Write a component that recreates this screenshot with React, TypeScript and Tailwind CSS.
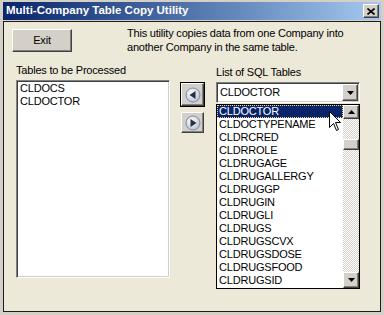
import React from 'react';

const SQL_TABLES = [
  'CLDOCTOR',
  'CLDOCTYPENAME',
  'CLDRCRED',
  'CLDRROLE',
  'CLDRUGAGE',
  'CLDRUGALLERGY',
  'CLDRUGGP',
  'CLDRUGIN',
  'CLDRUGLI',
  'CLDRUGS',
  'CLDRUGSCVX',
  'CLDRUGSDOSE',
  'CLDRUGSFOOD',
  'CLDRUGSID',
];

const PROCESSED = ['CLDOCS', 'CLDOCTOR'];

// classic 3d borders
const RAISED =
  'border border-t-white border-l-white border-r-[#404040] border-b-[#404040] shadow-[inset_-1px_-1px_#808080] bg-[#d4d0c8]';
const SUNKEN =
  'border border-t-[#808080] border-l-[#808080] border-r-white border-b-white shadow-[inset_1px_1px_#404040,inset_-1px_-1px_#d4d0c8] bg-white';

const CircleArrow = ({ dir }: { dir: 'left' | 'right' }) => (
  <svg width="16" height="16" viewBox="0 0 16 16">
    <defs>
      <radialGradient id={`g-${dir}`} cx="0.4" cy="0.35" r="0.7">
        <stop offset="0" stopColor="#ffffff" />
        <stop offset="1" stopColor="#b4c3d8" />
      </radialGradient>
    </defs>
    <circle cx="8" cy="8" r="7" fill={`url(#g-${dir})`} stroke="#7d8ba3" strokeWidth="1" />
    {dir === 'left' ? (
      <path d="M4.5 8 L10.5 4 L10.5 12 Z" fill="#2c3038" />
    ) : (
      <path d="M11.5 8 L5.5 4 L5.5 12 Z" fill="#2c3038" />
    )}
  </svg>
);

const DownTriangle = () => (
  <svg width="7" height="4" viewBox="0 0 7 4">
    <path d="M0 0 H7 L3.5 4 Z" fill="#000" />
  </svg>
);

const UpTriangle = () => (
  <svg width="7" height="4" viewBox="0 0 7 4">
    <path d="M0 4 H7 L3.5 0 Z" fill="#000" />
  </svg>
);

const Cursor = () => (
  <svg width="13" height="21" viewBox="0 0 13 21" className="absolute left-[112px] top-[6px]">
    <path
      d="M0.5 0.5 L0.5 16.5 L4.5 12.5 L7.5 19.5 L9.5 18.5 L6.5 11.5 L11.5 11.5 Z"
      fill="#fff"
      stroke="#000"
      strokeWidth="1"
    />
  </svg>
);

const App = () => {
  return (
    <div className="w-[384px] h-[315px] overflow-hidden bg-[#d4d0c8] font-['Liberation_Sans',Arial,sans-serif] text-[11px] tracking-[-0.2px] text-black">
      <div className="flex h-full flex-col px-[3px] pt-[2px] pb-[3px]">
        {/* title bar */}
        <div className="flex h-[18px] shrink-0 items-center bg-gradient-to-r from-[#0a246a] to-[#a6caf0] pl-[3px] pr-[2px]">
          <span className="text-[11.5px] font-bold tracking-normal text-white">Multi-Company Table Copy Utility</span>
          <div className={`ml-auto flex h-[14px] w-[16px] items-center justify-center ${RAISED}`}>
            <svg width="8" height="7" viewBox="0 0 8 7">
              <path d="M0.5 0.5 L7.5 6.5 M7.5 0.5 L0.5 6.5" stroke="#000" strokeWidth="1.6" />
            </svg>
          </div>
        </div>

        {/* client area */}
        <div className="mt-[1px] flex flex-1 flex-col border border-[#1c1c1c] bg-[#ece9d8]">
          <div className="flex items-start pt-[4px]">
            <button className={`ml-[8px] mt-[3px] h-[23px] w-[60px] ${RAISED} text-[11px]`}>Exit</button>
            <p className="ml-[55px] leading-[14px]">
              This utility copies data from one Company into
              <br />
              another Company in the same table.
            </p>
          </div>

          <div className="mt-[10px] flex items-start">
            {/* left column */}
            <div className="ml-[12px] flex flex-col">
              <span className="leading-[13px]">Tables to be Processed</span>
              <div className={`mt-[3px] h-[198px] w-[154px] ${SUNKEN} p-[1px]`}>
                {PROCESSED.map((t) => (
                  <div key={t} className="h-[13px] pl-[2px] leading-[13px]">
                    {t}
                  </div>
                ))}
              </div>
            </div>

            {/* move buttons */}
            <div className="ml-[10px] mt-[18px] flex flex-col">
              <button className="h-[25px] w-[25px] border border-black">
                <div className={`flex h-full w-full items-center justify-center ${RAISED}`}>
                  <CircleArrow dir="left" />
                </div>
              </button>
              <button className={`ml-[1px] mt-[5px] flex h-[21px] w-[23px] items-center justify-center ${RAISED}`}>
                <CircleArrow dir="right" />
              </button>
            </div>

            {/* right column */}
            <div className="ml-[11px] mt-[2px] flex flex-col">
              <span className="leading-[13px]">List of SQL Tables</span>
              <div className={`mt-[3px] flex h-[21px] w-[144px] items-center ${SUNKEN} p-[1px]`}>
                <span className="flex-1 pl-[2px] leading-[13px]">CLDOCTOR</span>
                <div className={`flex h-[17px] w-[16px] items-center justify-center ${RAISED}`}>
                  <DownTriangle />
                </div>
              </div>
              <div className="relative mt-[1px] flex h-[185px] w-[144px] border border-black bg-white">
                <div className="flex-1">
                  {SQL_TABLES.map((t, i) => (
                    <div
                      key={t}
                      className={
                        i === 0
                          ? 'h-[13px] bg-[#0a246a] pl-[1px] leading-[11px] text-white outline-1 -outline-offset-1 outline-dotted outline-[#f4dc8c]'
                          : 'h-[13px] pl-[2px] leading-[13px]'
                      }
                    >
                      {i === 0 ? <span className="block pl-[1px] leading-[13px]">{t}</span> : t}
                    </div>
                  ))}
                </div>
                <div className="flex w-[16px] flex-col bg-[repeating-conic-gradient(#d4d0c8_0_25%,#ffffff_0_50%)] bg-[length:2px_2px]">
                  <div className={`flex h-[14px] w-[16px] items-center justify-center ${RAISED}`}>
                    <UpTriangle />
                  </div>
                  <div className={`mt-[20px] h-[11px] w-[16px] ${RAISED}`} />
                  <div className={`mt-auto flex h-[16px] w-[16px] items-center justify-center ${RAISED}`}>
                    <DownTriangle />
                  </div>
                </div>
                <Cursor />
              </div>
            </div>
          </div>
        </div>
      </div>
    </div>
  );
};

export default App;
